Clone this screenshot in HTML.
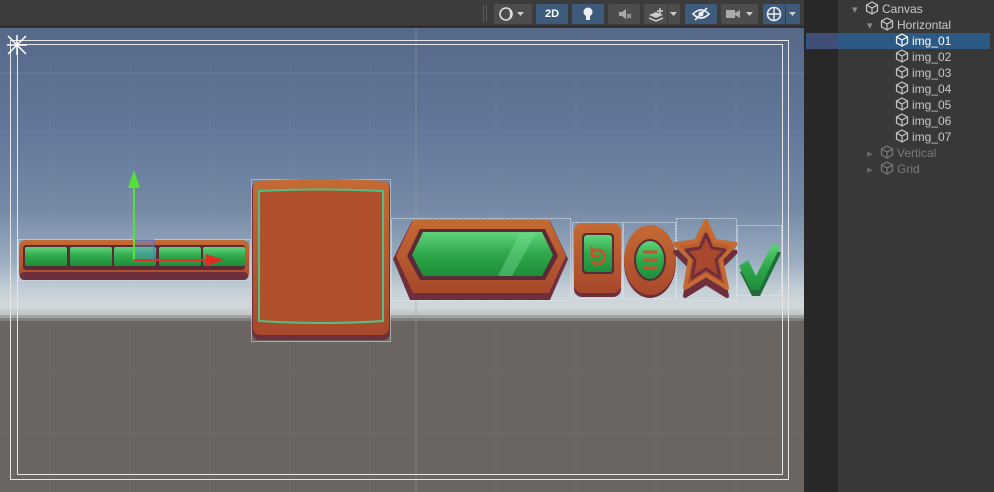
<!DOCTYPE html>
<html><head><style>
*{margin:0;padding:0;box-sizing:border-box}
body{width:994px;height:492px;overflow:hidden;background:#383838;font-family:"Liberation Sans",sans-serif;position:relative}
.tb{position:absolute;left:0;top:0;width:804px;height:27px;background:#3c3c3c;border-bottom:1px solid #232323}
.btn{position:absolute;top:4px;height:20px;border-radius:2px;background:#4d4d4d}
.blue{background:#3e5b7c}
.rp{position:absolute;left:804px;top:0;width:190px;height:492px;background:#383838}
.rp .dk{position:absolute;left:0;top:0;width:34px;height:492px;background:#282828}
.row{position:absolute;height:16px;line-height:16px;font-size:12px;color:#c8c8c8;white-space:nowrap}
.sel{position:absolute;left:2px;top:33px;width:184px;height:16px;background:#2c5a85}
.row svg{vertical-align:-2px;margin-right:3px}
.tri{display:inline-block;width:11px;color:#8a8a8a;font-size:11px;margin-right:2px}
</style></head><body>
<div class="tb">
 <div style="position:absolute;left:483px;top:5px;width:1px;height:17px;background:#5a5a5a"></div>
 <div style="position:absolute;left:486px;top:5px;width:1px;height:17px;background:#5a5a5a"></div>
 <div class="btn" style="left:494px;width:38px"><svg width="38" height="20"><circle cx="12" cy="10" r="6" fill="none" stroke="#ddd" stroke-width="1.6"/><path d="M12 4a6 6 0 0 1 0 12a4 6 0 0 0 0-12z" fill="#ddd"/><path d="M23 8h7l-3.5 4z" fill="#ccc"/></svg></div>
 <div class="btn blue" style="left:536px;width:32px;color:#fff;font-weight:bold;font-size:11px;text-align:center;line-height:20px">2D</div>
 <div class="btn blue" style="left:572px;width:32px"><svg width="32" height="20"><circle cx="16" cy="8" r="4.5" fill="#eee"/><rect x="14" y="12" width="4" height="4" fill="#eee"/></svg></div>
 <div class="btn" style="left:608px;width:32px"><svg width="32" height="20"><path d="M11 8h3l4-3v10l-4-3h-3z" fill="#aaa"/><path d="M19 10l4 4M23 10l-4 4" stroke="#aaa" stroke-width="1.4"/></svg></div>
 <div class="btn" style="left:644px;width:36px"><svg width="36" height="20"><path d="M5 11l7-3 7 3-7 3z" fill="#ccc"/><path d="M5 14l7 3 7-3" stroke="#ccc" fill="none" stroke-width="1.5"/><path d="M16 4v6M13 7h6" stroke="#ccc" stroke-width="1.5"/><rect x="23" y="0" width="1" height="20" fill="#3c3c3c"/><path d="M26 8h7l-3.5 4z" fill="#ccc"/></svg></div>
 <div class="btn blue" style="left:685px;width:32px"><svg width="32" height="20"><path d="M8 10q8-8 16 0q-8 8-16 0z" fill="none" stroke="#eee" stroke-width="1.6"/><circle cx="16" cy="10" r="2.5" fill="#eee"/><path d="M10 16l12-12" stroke="#eee" stroke-width="1.6"/></svg></div>
 <div class="btn" style="left:721px;width:37px"><svg width="37" height="20"><rect x="5" y="6" width="9" height="8" fill="#aaa"/><path d="M14 9l5-3v8l-5-3z" fill="#aaa"/><path d="M25 8h7l-3.5 4z" fill="#ccc"/></svg></div>
 <div class="btn blue" style="left:763px;width:37px"><svg width="37" height="20"><circle cx="11" cy="10" r="6.5" fill="none" stroke="#eee" stroke-width="1.6"/><path d="M4.5 10h13M11 3.5v13" stroke="#eee" stroke-width="1.4"/><rect x="22" y="0" width="1" height="20" fill="#3c3c3c"/><path d="M26 8h7l-3.5 4z" fill="#ccc"/></svg></div>
</div>

<svg style="position:absolute;left:0;top:28px" width="804" height="464">
<defs>
<linearGradient id="sky" x1="0" y1="0" x2="0" y2="1">
<stop offset="0" stop-color="#566888"/><stop offset="0.35" stop-color="#62779a"/><stop offset="0.62" stop-color="#7589a6"/><stop offset="0.8" stop-color="#9aacbf"/><stop offset="0.9" stop-color="#c3ced5"/><stop offset="0.96" stop-color="#d2d9dc"/><stop offset="1" stop-color="#b8bcbd"/></linearGradient>
<linearGradient id="wood" x1="0" y1="0" x2="0" y2="1"><stop offset="0" stop-color="#c46a33"/><stop offset="1" stop-color="#a8482c"/></linearGradient>
<linearGradient id="grn" x1="0" y1="0" x2="0" y2="1"><stop offset="0" stop-color="#5fd47a"/><stop offset="0.5" stop-color="#2ea84a"/><stop offset="1" stop-color="#1f8d3a"/></linearGradient>
</defs>
<rect width="804" height="290" fill="url(#sky)"/>
<rect y="290" width="804" height="174" fill="#6a6560"/>
<rect y="287" width="804" height="6" fill="#8f9192" opacity="0.6"/>
<g stroke="#ffffff" stroke-opacity="0.05">
<path d="M0 105H804M0 165H804M0 225H804M0 345H804M0 405H804"/>
<path d="M50 0V464M130 0V464M210 0V464M290 0V464M370 0V464M496 0V464M576 0V464M656 0V464M736 0V464"/>
</g>
<path d="M416 0V464" stroke="#9aa0a6" stroke-opacity="0.5"/>
<path d="M0 45H804" stroke="#9aa0a6" stroke-opacity="0.3"/>
<rect x="10.5" y="12.5" width="778" height="439" fill="none" stroke="#e6e6e6" stroke-width="1"/>
<rect x="17.5" y="16.5" width="765" height="430" fill="none" stroke="#e6e6e6" stroke-width="1"/>
<g stroke="#fff" stroke-width="1.5" fill="none"><path d="M8 8l18 18M26 8l-18 18M17 7v20M7 17h20"/></g>

<rect x="18.5" y="211.5" width="232" height="41" fill="none" stroke="#c8d8e0" stroke-opacity="0.7"/>
<rect x="19" y="212" width="230" height="40" rx="7" fill="url(#wood)"/>
<rect x="20" y="244" width="228" height="8" rx="4" fill="#6e2e3c"/>
<rect x="23" y="217" width="222" height="25" rx="3" fill="#5a2a36"/>
<g fill="url(#grn)"><rect x="25" y="219" width="42" height="19" rx="2"/><rect x="70" y="219" width="42" height="19" rx="2"/><rect x="114" y="219" width="42" height="19" rx="2"/><rect x="159" y="219" width="42" height="19" rx="2"/><rect x="203" y="219" width="42" height="19" rx="2"/></g>

<rect x="251.5" y="151.5" width="139" height="162" fill="none" stroke="#c8d8e0" stroke-opacity="0.6"/>
<path d="M256 154q64-4 130 0q4 2 4 8v140q0 10-8 10h-122q-8 0-8-10v-140q0-6 4-8z" fill="#6e2e3c"/>
<path d="M256 153q64-4 130 0q3 2 3 8v138q0 8-8 8h-120q-8 0-8-8v-138q0-6 3-8z" fill="url(#wood)"/>
<path d="M259 163q60-3 124 0v130q-62 4-124 0z" fill="#b2502e" stroke="#4fbf86" stroke-width="2"/>

<rect x="391.5" y="190.5" width="179" height="82" fill="none" stroke="#e0e8ee" stroke-dasharray="2 1" stroke-opacity="0.7"/>
<path d="M412 193h138l18 38-18 41h-140l-17-41z" fill="#6e2e3c"/>
<path d="M413 192h136l17 36-17 37h-136l-17-37z" fill="url(#wood)"/>
<path d="M420 201h125l13 27-13 24h-125l-13-24z" fill="#5a2a36"/>
<path d="M423 204h119l11 23-11 21h-119l-11-21z" fill="url(#grn)"/>
<path d="M520 205h16l-24 43h-14z" fill="#7ee09a" opacity="0.4"/>

<rect x="572.5" y="194.5" width="50" height="76" fill="none" stroke="#e0e8ee" stroke-dasharray="2 1" stroke-opacity="0.7"/>
<rect x="574" y="197" width="47" height="72" rx="8" fill="#6e2e3c"/>
<rect x="574" y="195" width="47" height="70" rx="8" fill="url(#wood)"/>
<rect x="582" y="205" width="32" height="41" rx="4" fill="#5a2a36"/>
<rect x="584" y="207" width="28" height="37" rx="3" fill="url(#grn)"/>
<path d="M592 233a7 7 0 1 0 2-10l-2-2v7h7" fill="none" stroke="#c4552e" stroke-width="3"/>

<rect x="623.5" y="194.5" width="52" height="76" fill="none" stroke="#e0e8ee" stroke-dasharray="2 1" stroke-opacity="0.7"/>
<ellipse cx="650" cy="234" rx="26" ry="36" fill="#6e2e3c"/>
<ellipse cx="650" cy="232" rx="26" ry="35" fill="url(#wood)"/>
<ellipse cx="650" cy="232" rx="16" ry="21" fill="#5a2a36"/>
<ellipse cx="650" cy="232" rx="14" ry="19" fill="url(#grn)"/>
<g stroke="#c4552e" stroke-width="3"><path d="M643 224h14M643 232h14M643 240h14"/></g>

<rect x="676.5" y="190.5" width="60" height="82" fill="none" stroke="#e0e8ee" stroke-dasharray="2 1" stroke-opacity="0.7"/>
<path d="M706 193l9 20 21 3-15 15 6 29-21-13-21 13 5-29-15-15 21-3z" fill="#6e2e3c" stroke="#6e2e3c" stroke-width="4" stroke-linejoin="round" transform="translate(0,8)"/>
<path d="M706 193l9 20 21 3-15 15 6 29-21-13-21 13 5-29-15-15 21-3z" fill="url(#wood)" stroke="#c46a33" stroke-width="4" stroke-linejoin="round"/>
<path d="M706 206l6 14 13 2-9 10 4 18-14-9-14 9 3-18-9-10 14-2z" fill="#a8482c" stroke="#6e2e3c" stroke-width="3" stroke-linejoin="round"/>

<rect x="737.5" y="197.5" width="44" height="70" fill="none" stroke="#e0e8ee" stroke-dasharray="2 1" stroke-opacity="0.7"/>
<path d="M740 244l9-6 8 16 17-33 7 4-21 43h-8z" fill="#1f6e3a"/>
<path d="M739 238l9-6 8 16 17-33 7 4-21 43h-8z" fill="url(#grn)"/>

<rect x="134" y="212" width="20" height="20" fill="#5a8cd8" fill-opacity="0.4" stroke="#3a6ef0"/>
<path d="M134 232V158" stroke="#55e03a" stroke-width="2"/>
<path d="M128 160l6-18 6 18z" fill="#55e03a"/>
<path d="M134 232H208" stroke="#e03030" stroke-width="2"/>
<path d="M206 226l18 6-18 6z" fill="#e02a22"/>
</svg>

<div class="rp">
 <div class="dk"></div>
 <div class="sel"></div>
 <div style="position:absolute;left:4px;top:33px;width:30px;height:16px;background:#6a3a5a;opacity:.35"></div>
</div>
<div class="row" style="left:852px;top:1px"><span class="tri">▾</span><svg width="14" height="14" viewBox="0 0 14 14"><path d="M7 1l5.5 3v6L7 13 1.5 10V4z M1.5 4L7 7l5.5-3 M7 7v6" fill="none" stroke="#c8c8c8" stroke-width="1.2"/></svg>Canvas</div>
<div class="row" style="left:867px;top:17px"><span class="tri">▾</span><svg width="14" height="14" viewBox="0 0 14 14"><path d="M7 1l5.5 3v6L7 13 1.5 10V4z M1.5 4L7 7l5.5-3 M7 7v6" fill="none" stroke="#c8c8c8" stroke-width="1.2"/></svg>Horizontal</div>
<div class="row" style="left:895px;top:33px;color:#fff"><svg width="14" height="14" viewBox="0 0 14 14"><path d="M7 1l5.5 3v6L7 13 1.5 10V4z M1.5 4L7 7l5.5-3 M7 7v6" fill="none" stroke="#fff" stroke-width="1.2"/></svg>img_01</div>
<div class="row" style="left:895px;top:49px"><svg width="14" height="14" viewBox="0 0 14 14"><path d="M7 1l5.5 3v6L7 13 1.5 10V4z M1.5 4L7 7l5.5-3 M7 7v6" fill="none" stroke="#c8c8c8" stroke-width="1.2"/></svg>img_02</div>
<div class="row" style="left:895px;top:65px"><svg width="14" height="14" viewBox="0 0 14 14"><path d="M7 1l5.5 3v6L7 13 1.5 10V4z M1.5 4L7 7l5.5-3 M7 7v6" fill="none" stroke="#c8c8c8" stroke-width="1.2"/></svg>img_03</div>
<div class="row" style="left:895px;top:81px"><svg width="14" height="14" viewBox="0 0 14 14"><path d="M7 1l5.5 3v6L7 13 1.5 10V4z M1.5 4L7 7l5.5-3 M7 7v6" fill="none" stroke="#c8c8c8" stroke-width="1.2"/></svg>img_04</div>
<div class="row" style="left:895px;top:97px"><svg width="14" height="14" viewBox="0 0 14 14"><path d="M7 1l5.5 3v6L7 13 1.5 10V4z M1.5 4L7 7l5.5-3 M7 7v6" fill="none" stroke="#c8c8c8" stroke-width="1.2"/></svg>img_05</div>
<div class="row" style="left:895px;top:113px"><svg width="14" height="14" viewBox="0 0 14 14"><path d="M7 1l5.5 3v6L7 13 1.5 10V4z M1.5 4L7 7l5.5-3 M7 7v6" fill="none" stroke="#c8c8c8" stroke-width="1.2"/></svg>img_06</div>
<div class="row" style="left:895px;top:129px"><svg width="14" height="14" viewBox="0 0 14 14"><path d="M7 1l5.5 3v6L7 13 1.5 10V4z M1.5 4L7 7l5.5-3 M7 7v6" fill="none" stroke="#c8c8c8" stroke-width="1.2"/></svg>img_07</div>
<div class="row" style="left:867px;top:145px;color:#7a7a7a"><span class="tri" style="color:#6a6a6a">▸</span><svg width="14" height="14" viewBox="0 0 14 14"><path d="M7 1l5.5 3v6L7 13 1.5 10V4z M1.5 4L7 7l5.5-3 M7 7v6" fill="none" stroke="#7a7a7a" stroke-width="1.2"/></svg>Vertical</div>
<div class="row" style="left:867px;top:161px;color:#7a7a7a"><span class="tri" style="color:#6a6a6a">▸</span><svg width="14" height="14" viewBox="0 0 14 14"><path d="M7 1l5.5 3v6L7 13 1.5 10V4z M1.5 4L7 7l5.5-3 M7 7v6" fill="none" stroke="#7a7a7a" stroke-width="1.2"/></svg>Grid</div>
</body></html>
